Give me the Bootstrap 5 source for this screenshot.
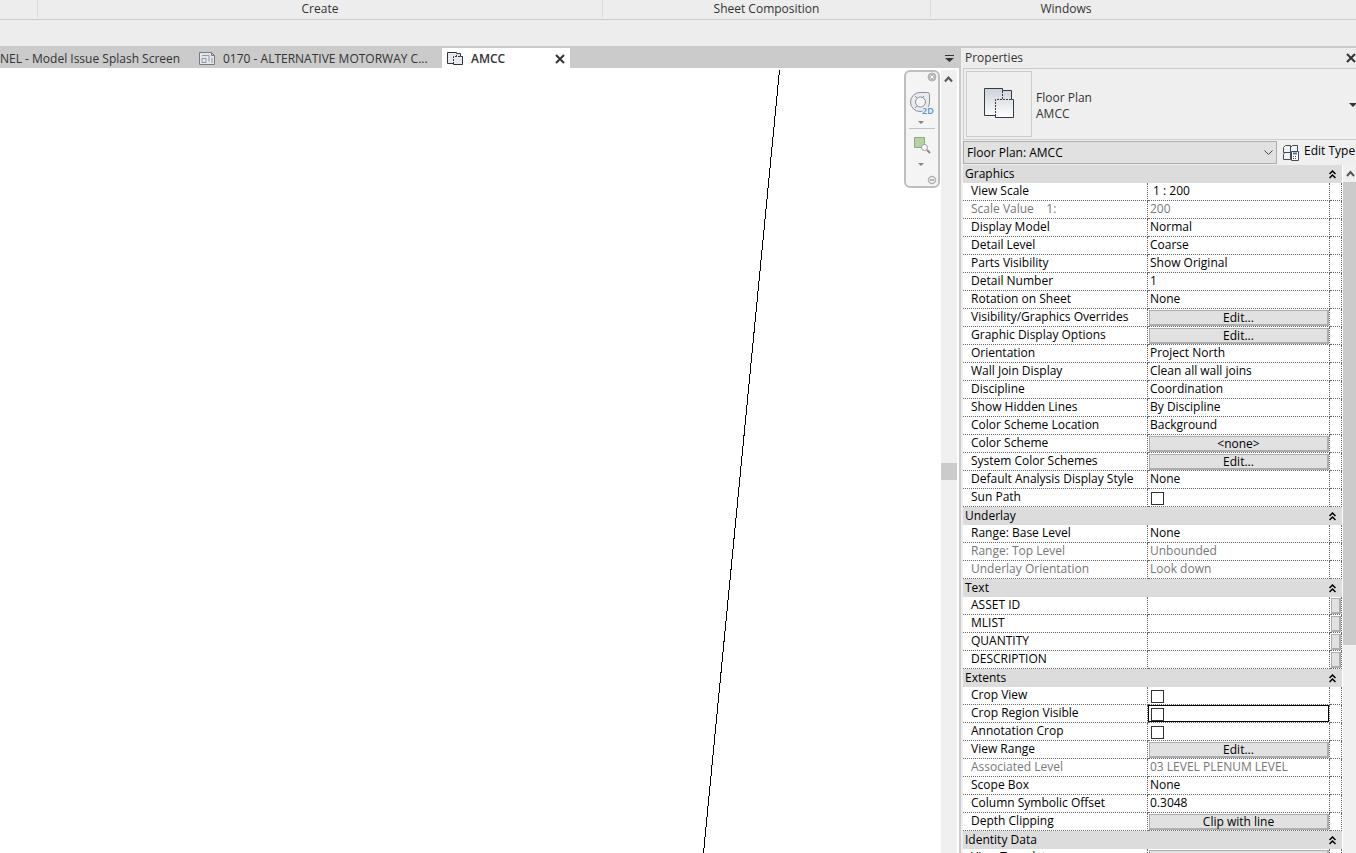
<!DOCTYPE html>
<html lang="en">
<head>
<meta charset="utf-8">
<meta name="viewport" content="width=device-width, initial-scale=1">
<title>AMCC - Floor Plan</title>
<link href="https://cdn.jsdelivr.net/npm/bootstrap@5.3.0/dist/css/bootstrap.min.css" rel="stylesheet">
<style>
  body { font: 12px/16px "Open Sans", "Noto Sans", sans-serif; color: #333; background: #ededed; }
  svg { display: block; flex-shrink: 0; }
  button { font: inherit; color: inherit; border: 0; background: none; padding: 0; }
  .ribbon { display: grid; grid-template-columns: 38fr 565fr 328fr 270fr 155fr; height: 20px; border-bottom: 1px solid #cbcbcb; }
  .ribbon-group { text-align: center; height: 18px; line-height: 18px; border-right: 1px solid #dcdcdc; }
  .ribbon-group:nth-last-child(-n+2) { border-right: 0; }
  .ribbon-gap { height: 26px; }
  .workspace { border-top: 2px solid #cbcbcb; min-height: 0; }
  .docs { border-right: 2px solid #cbcbcb; }
  .tabstrip { height: 20px; background: #cbcbcb; }
  .doc-tab { color: #333; text-decoration: none; height: 20px; line-height: 20px; padding-top: 1px; white-space: nowrap; }
  .tab-splash { width: 199px; }
  .tab-sheet { width: 243px; }
  .tab-current { width: 128px; background: #fff; font-weight: 600; }
  .canvas { background: #fff; min-height: 0; }
  .drawing { min-width: 0; }
  .track { width: 16px; background: #f0f0f0; margin: 2px 2px 0 0; }
  .thumb { background: #cbcbcb; }
  .navbar-tools { top: 2px; right: 1px; width: 36px; height: 118px; border: 2px solid #bebebe; border-radius: 6px; background: #f4f4f4; }
  .props { width: 395px; padding-left: 2px; background: #efefef; color: #333; }
  .props-title { height: 20px; padding: 1px 0 0 2px; background: #ededed; }
  .type-box { height: 72px; border: 1px solid #cbcbcb; border-right: 0; padding: 2px 0 2px 2px; }
  .type-thumb { width: 66px; height: 66px; border: 1px solid #cbcbcb; }
  .inst-row { height: 26px; padding-top: 1px; gap: 6px; }
  .inst-select { width: 314px; height: 23px; border: 1px solid #adadad; background: #e1e1e1; color: #000; padding: 1px 3px 0; font: inherit; appearance: none; border-radius: 0; }
  .chev { right: 4px; top: 9px; pointer-events: none; }
  .grid-host { min-height: 0; background: #fff; }
  .params { table-layout: fixed; width: 379px; border-collapse: separate; border-spacing: 0; color: #000; }
  .params tr { height: 18px; }
  .params td, .params th { height: 18px; padding: 0; font-weight: 400; line-height: 16px; white-space: nowrap; overflow: hidden; vertical-align: top; }
  .params tbody th[scope=row] { padding-left: 8px; }
  .params td, .params th[scope=row] { border-right: 1px dotted #666; border-bottom: 1px dotted #666; }
  .params .grp { background: #dcdcdc; padding: 1px 6px 0 2px; }
  .params .off { color: #777; }
  .params label { display: block; white-space: pre; }
  .val { display: block; padding-left: 2px; white-space: pre; }
  .cmd { display: block; width: 180px; height: 16px; margin: 1px 0 0 1px; line-height: 14px; text-align: center; background: #e1e1e1; border: 1px solid #adadad; border-right-width: 2px; border-bottom-width: 2px; color: #000; }
  .more { width: 10px; }
  .tick { appearance: none; display: block; width: 13px; height: 13px; margin: 3px 0 0 3px; border: 1px solid #333; background: #fff; }
  .focus-cell { box-shadow: inset 0 0 0 1px #000; }
  .vscroll { width: 13px; background: #f0f0f0; margin-left: 1px; }
  .vscroll .thumb { height: 463px; }
</style>
</head>
<body class="d-flex flex-column vh-100 overflow-hidden">
<header>
  <div class="ribbon">
    <div class="ribbon-group"></div><div class="ribbon-group">Create</div><div class="ribbon-group">Sheet Composition</div><div class="ribbon-group">Windows</div><div class="ribbon-group"></div>
  </div>
  <div class="ribbon-gap"></div>
</header>
<div class="workspace d-flex flex-fill">
  <main class="docs d-flex flex-column flex-fill overflow-hidden">
    <nav class="tabstrip d-flex" aria-label="Open views">
      <a href="#" class="doc-tab tab-splash d-flex align-items-center">NEL - Model Issue Splash Screen</a>
      <a href="#" class="doc-tab tab-sheet d-flex align-items-center gap-2">
        <svg width="16" height="14" fill="#e4e6ea" stroke="#777b84"><path d="M.5.500h12l3 3v9h-15zM12.500.500v3h3"/><path d="M3 3.500h7v6M3 6.500h4v4h-4zM13 6v5" fill="none" stroke="#9298a3"/></svg>
        <span>0170 - ALTERNATIVE MOTORWAY C...</span>
      </a>
      <div class="doc-tab tab-current d-flex align-items-center ps-1 pe-1">
        <svg class="me-2" width="17" height="14" fill="#e7e9ef" stroke="#30343f"><path d="M1.500.500h9v1h4v3h2v8h-9v-1h-6z"/><path d="M7.500 12v-7.500h9M10.500 5v-3" fill="none" stroke-dasharray="2 1"/></svg>
        <span class="flex-fill">AMCC</span>
        <button aria-label="Close view"><svg width="12" height="12" stroke="#333" stroke-width="2"><path d="M2 2l8 8M10 2l-8 8"/></svg></button>
      </div>
      <button class="ms-auto me-1" aria-label="View list"><svg width="11" height="10" fill="#333"><path d="M1 2h9v1H1zM1 5h9L5.500 9z"/></svg></button>
    </nav>
    <div class="canvas d-flex flex-fill">
      <div class="drawing position-relative flex-fill">
        <svg class="w-100 h-100 position-absolute" viewBox="0 0 941 785" preserveAspectRatio="xMaxYMin slice" shape-rendering="crispEdges"><path d="M779.500 2L703.500 785" stroke="#000"/></svg>
        <div class="navbar-tools position-absolute">
          <svg width="32" height="114" fill="none" font-family="Noto Sans" font-weight="600">
            <g stroke="#b4b4b4"><circle cx="26" cy="5" r="4" fill="#b8b8b8"/><circle cx="26" cy="108" r="3.500" stroke-width="1.500"/><path d="M24 108h4" stroke-width="2"/></g>
            <path d="M24.500 3.500l3 3m0-3l-3 3" stroke="#fff"/>
            <g stroke="#8b9099"><path d="M14 20.500h7.500q2 0 2 2V30a9 9.500 0 0 1-9.500 9.500a9.500 9.500 0 0 1 0-19z" fill="#e9ebee"/><circle cx="14.500" cy="30" r="5" fill="#f4f4f4"/><path d="M9 24l2 2m7-2l-2 2M9 36l2-2"/></g>
            <text x="16" y="42" font-size="9" fill="#5f93c4" stroke="#f4f4f4" stroke-width="2" paint-order="stroke">2D</text>
            <path d="M12 49h6l-3 3zM12 91h6l-3 3z" fill="#858585"/>
            <path d="M3 56.500h26" stroke="#c2c2c2"/>
            <path d="M8.500 65.500h10v10h-10z" fill="#b5d1a6" stroke="#8aad7a"/>
            <circle cx="18.500" cy="75.500" r="3" fill="#fff" stroke="#999"/><path d="M21 78l3 3" stroke="#888" stroke-width="2"/>
          </svg>
        </div>
      </div>
      <div class="track d-flex flex-column">
        <svg width="16" height="17" fill="none" stroke="#555" stroke-width="2"><path d="M4 11.500L7.500 7.500l3.500 4"/></svg>
        <div style="height:48%"></div>
        <div class="thumb" style="height:17px"></div>
      </div>
    </div>
  </main>
  <aside class="props d-flex flex-column flex-shrink-0 overflow-hidden">
    <div class="props-title d-flex align-items-center justify-content-between">
      <span>Properties</span>
      <button aria-label="Close properties"><svg width="11" height="12" stroke="#333" stroke-width="2"><path d="M2 2l8 8M10 2l-8 8"/></svg></button>
    </div>
    <div class="type-box d-flex align-items-center">
      <div class="type-thumb d-flex align-items-center justify-content-center me-1">
        <svg width="32" height="34"><defs><linearGradient id="g" x2="0" y2="1"><stop stop-color="#ccd0d8"/><stop offset="1" stop-color="#fff"/></linearGradient></defs><g fill="url(#g)" stroke="#343a46"><path d="M1.500 1.500h18v2h9v9h2v18h-18v-2h-11z"/><path d="M12.500 29v-16.500h17M19.500 12v-8" fill="none" stroke-dasharray="2 1"/></g></svg>
      </div>
      <div class="flex-fill pt-1">Floor Plan<br>AMCC</div>
      <button class="pt-1" aria-label="Change type"><svg width="8" height="5" fill="#333"><path d="M1 0h8L5 4z"/></svg></button>
    </div>
    <div class="inst-row d-flex align-items-start">
      <div class="position-relative">
        <select class="inst-select d-block" aria-label="Instance"><option>Floor Plan: AMCC</option></select>
        <svg class="chev position-absolute" width="9" height="6" fill="none" stroke="#444"><path d="M.5.500l4 4 4-4"/></svg>
      </div>
      <button class="d-flex align-items-center gap-1 text-nowrap text-black">
        <svg class="mt-1" width="17" height="17" fill="#f2f3f5" stroke="#444b57"><path d="M.5 2.500l2-2h5v7h-7zM7.500 2.500l2-2h5v7h-7zM.5 9.500l1-2h6v7h-7z"/><path d="M8.500 6.500h7v9h-7z" fill="#fff"/><path d="M10 8.500h4" stroke="#3577b5" stroke-width="2"/><path d="M10 11.500h4M10 13.500h4" stroke-dasharray="1 1"/></svg>
        Edit Type
      </button>
    </div>
    <div class="grid-host d-flex flex-fill overflow-hidden">
      <div><table class="params"><colgroup><col style="width:185px"><col style="width:182px"><col style="width:12px"></colgroup><tbody id="params"></tbody></table></div>
      <div class="vscroll">
        <svg width="13" height="17" fill="none" stroke="#555" stroke-width="2"><path d="M4 11l3.500-4L11 11"/></svg>
        <div class="thumb"></div>
      </div>
    </div>
  </aside>
</div>
<script>
  // [label, kind, value]; kinds: t text, o read-only text, b command button, c tick box, f focused tick box, m text with a browse button
  const groups = {
    "Graphics": [["View Scale","t"," 1 : 200"],["Scale Value    1:","o","200"],["Display Model","t","Normal"],["Detail Level","t","Coarse"],["Parts Visibility","t","Show Original"],["Detail Number","t","1"],["Rotation on Sheet","t","None"],["Visibility/Graphics Overrides","b","Edit..."],["Graphic Display Options","b","Edit..."],["Orientation","t","Project North"],["Wall Join Display","t","Clean all wall joins"],["Discipline","t","Coordination"],["Show Hidden Lines","t","By Discipline"],["Color Scheme Location","t","Background"],["Color Scheme","b","&lt;none&gt;"],["System Color Schemes","b","Edit..."],["Default Analysis Display Style","t","None"],["Sun Path","c"]],
    "Underlay": [["Range: Base Level","t","None"],["Range: Top Level","o","Unbounded"],["Underlay Orientation","o","Look down"]],
    "Text": [["ASSET ID","m",""],["MLIST","m",""],["QUANTITY","m",""],["DESCRIPTION","m",""]],
    "Extents": [["Crop View","c"],["Crop Region Visible","f"],["Annotation Crop","c"],["View Range","b","Edit..."],["Associated Level","o","03 LEVEL PLENUM LEVEL"],["Scope Box","t","None"],["Column Symbolic Offset","t","0.3048"],["Depth Clipping","b","Clip with line"]],
    "Identity Data": [["View Template","b",""]]
  };
  const fold = '<svg width="7" height="9" fill="none" stroke="#000" stroke-width="1.500"><path d="M.5 4l3-3 3 3M.5 8l3-3 3 3"/></svg>';
  let html = "", n = 0;
  for (const [name, rows] of Object.entries(groups)) {
    html += `<tr><th colspan="3" scope="rowgroup" class="grp"><div class="d-flex align-items-center justify-content-between">${name}<button aria-label="Collapse ${name}">${fold}</button></div></th></tr>`;
    for (const [label, kind, value] of rows) {
      const id = "p" + n++, off = kind === "o" ? "off" : "";
      const tick = kind === "c" || kind === "f";
      const cell = tick ? `<input type="checkbox" class="tick" id="${id}">`
        : kind === "b" ? `<button class="cmd" id="${id}">${value}</button>`
        : `<output class="val" id="${id}">${value}</output>`;
      html += `<tr class="${off}"><th scope="row"><label for="${id}">${label}</label></th><td class="${kind === "f" ? "focus-cell" : ""}">${cell}</td><td>${kind === "m" ? `<button class="cmd more" aria-label="Browse ${label}"></button>` : ""}</td></tr>`;
    }
  }
  document.getElementById("params").innerHTML = html;
</script>
<script src="https://cdn.jsdelivr.net/npm/bootstrap@5.3.0/dist/js/bootstrap.bundle.min.js"></script>
</body>
</html>
